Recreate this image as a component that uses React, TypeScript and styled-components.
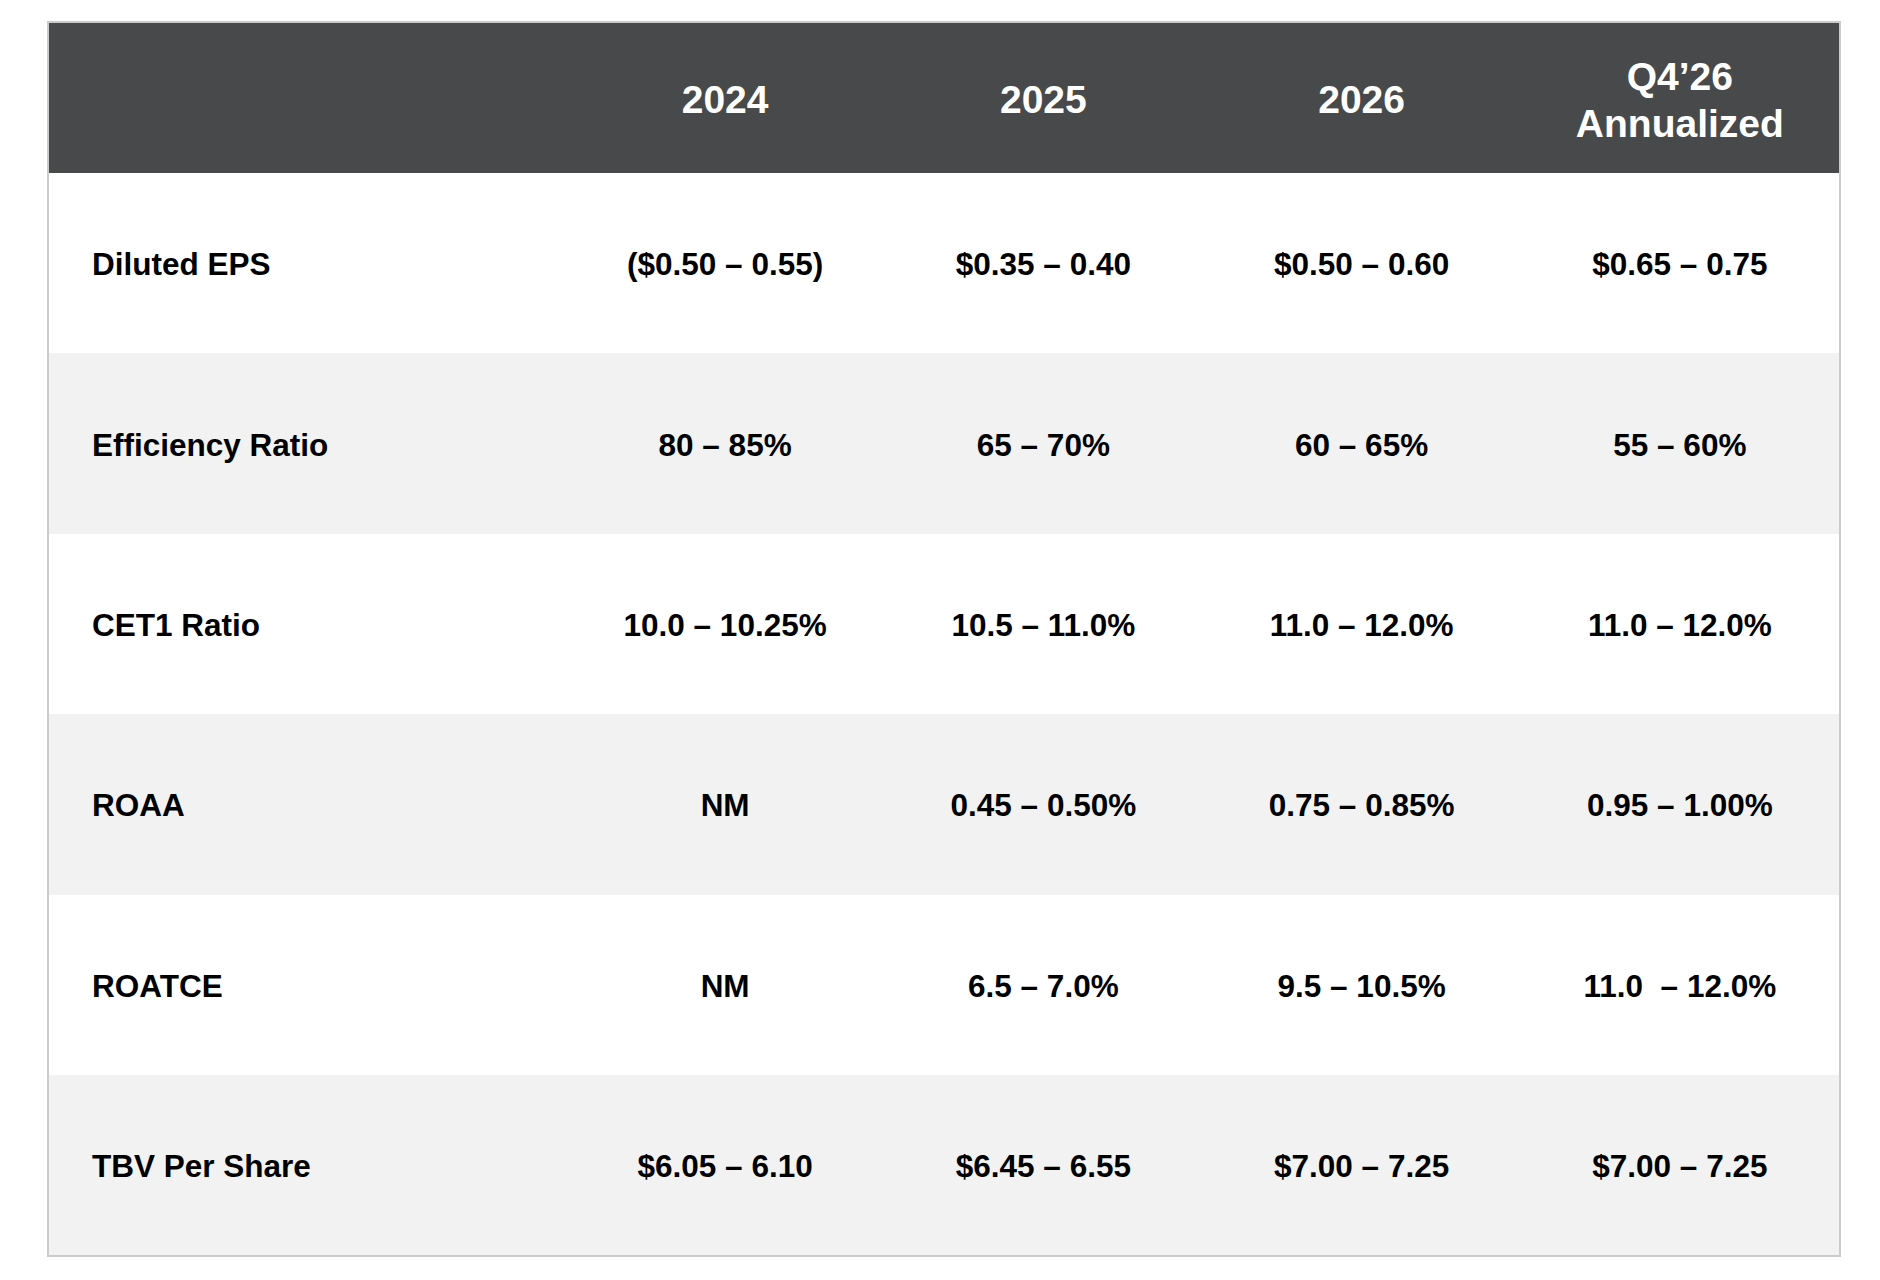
import React from 'react';
import styled, { createGlobalStyle } from 'styled-components';

interface MetricRow {
  label: string;
  values: string[];
}

const years = ['2024', '2025', '2026'];

const rows: MetricRow[] = [
  { label: 'Diluted EPS', values: ['($0.50 – 0.55)', '$0.35 – 0.40', '$0.50 – 0.60', '$0.65 – 0.75'] },
  { label: 'Efficiency Ratio', values: ['80 – 85%', '65 – 70%', '60 – 65%', '55 – 60%'] },
  { label: 'CET1 Ratio', values: ['10.0 – 10.25%', '10.5 – 11.0%', '11.0 – 12.0%', '11.0 – 12.0%'] },
  { label: 'ROAA', values: ['NM', '0.45 – 0.50%', '0.75 – 0.85%', '0.95 – 1.00%'] },
  { label: 'ROATCE', values: ['NM', '6.5 – 7.0%', '9.5 – 10.5%', '11.0\u00a0 – 12.0%'] },
  { label: 'TBV Per Share', values: ['$6.05 – 6.10', '$6.45 – 6.55', '$7.00 – 7.25', '$7.00 – 7.25'] },
];

const App: React.FC = () => {
  return (
    <Page>
      <GlobalStyle />
      <Table>
        <HeaderRow>
          <HeaderCell />
          {years.map(y => (
            <HeaderCell key={y}>{y}</HeaderCell>
          ))}
          <HeaderCell>
            Q4’26
            <br />
            Annualized
          </HeaderCell>
        </HeaderRow>
        {rows.map((row, i) => (
          <BodyRow key={row.label} shaded={i % 2 === 1}>
            <LabelCell>{row.label}</LabelCell>
            {row.values.map((v, j) => (
              <ValueCell key={j}>{v}</ValueCell>
            ))}
          </BodyRow>
        ))}
      </Table>
    </Page>
  );
};

const GlobalStyle = createGlobalStyle`
  html, body {
    margin: 0;
    padding: 0;
    background: #ffffff;
  }
  body {
    font-family: "Liberation Sans", Arial, sans-serif;
  }
`;

const Page = styled.div`
  padding: 21px 0 0 47px;
`;

const Table = styled.div`
  width: 1794px;
  border: 2px solid #cbcbcb;
  box-sizing: border-box;
`;

const HeaderRow = styled.div`
  display: grid;
  grid-template-columns: 517px repeat(4, 1fr);
  height: 150px;
  background-color: #48494b;
`;

const HeaderCell = styled.div`
  display: flex;
  align-items: center;
  justify-content: center;
  padding-top: 3px;
  text-align: center;
  color: #ffffff;
  font-weight: bold;
  font-size: 39px;
  line-height: 47px;
`;

const BodyRow = styled.div<{ shaded: boolean }>`
  display: grid;
  grid-template-columns: 517px repeat(4, 1fr);
  height: 180.4px;
  background-color: ${props => (props.shaded ? '#f2f2f2' : '#ffffff')};
`;

const LabelCell = styled.div`
  display: flex;
  align-items: center;
  padding: 3px 0 0 43px;
  color: #000000;
  font-weight: bold;
  font-size: 31.5px;
`;

const ValueCell = styled.div`
  display: flex;
  align-items: center;
  justify-content: center;
  padding-top: 3px;
  color: #000000;
  font-weight: bold;
  font-size: 31.5px;
  white-space: pre;
`;

export default App;
